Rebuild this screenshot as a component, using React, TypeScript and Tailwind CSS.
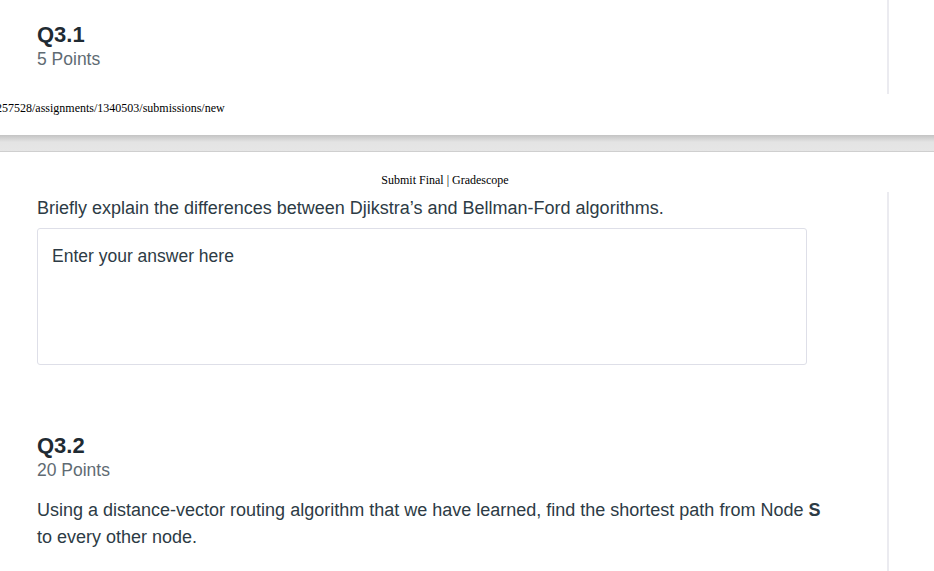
import React from "react";

export default function App() {
  const sans = { fontFamily: '"Liberation Sans", Arial, sans-serif' };
  return (
    <div className="w-[934px] h-[571px] overflow-hidden bg-white relative" style={sans}>
      {/* Page 1 tail */}
      <div className="h-[135px] flex flex-col">
        <div className="w-[889px] h-[94px] border-r-2 border-[#ebebf0] pl-[37px] pt-[22px]">
          <div className="text-[22px] leading-[26px] font-bold text-[#1f2b33]">Q3.1</div>
          <div className="text-[17.5px] leading-[22px] text-[#5f6b73]">5 Points</div>
        </div>
        <div
          className="ml-[-4px] mt-[7px] text-[12px] leading-[15px] text-black whitespace-nowrap"
          style={{ fontFamily: '"Liberation Serif", "Times New Roman", serif' }}
        >
          257528/assignments/1340503/submissions/new
        </div>
      </div>
      {/* page break band */}
      <div className="h-[17px] bg-gradient-to-b from-[#c4c4c4] via-[#e4e4e4] via-[45%] to-[#e6e6e6] border-b border-[#cfcfcf]" />
      {/* Page 2 */}
      <div className="relative">
        <div
          className="absolute left-0 top-[21px] w-[890px] text-center text-[12px] leading-[15px] text-black"
          style={{ fontFamily: '"Liberation Serif", "Times New Roman", serif' }}
        >
          Submit Final | Gradescope
        </div>
        <div className="flex">
          <div className="w-[887px] pl-[37px] pt-[44px]">
            <div className="text-[18px] leading-[24px] text-[#2d3b45]">
              Briefly explain the differences between Djikstra’s and Bellman-Ford algorithms.
            </div>
            <div className="mt-[8px] w-[770px] h-[137px] border border-[#dedfe8] rounded-[3px] px-[14px] pt-[16px] text-[17.5px] leading-[22px] text-[#2d3b45]">
              Enter your answer here
            </div>
            <div className="mt-[68px] text-[22px] leading-[26px] font-bold text-[#1f2b33]">Q3.2</div>
            <div className="text-[17.5px] leading-[22px] text-[#5f6b73]">20 Points</div>
            <div className="mt-[16px] w-[795px] text-[18px] leading-[27px] text-[#2d3b45]">
              Using a distance-vector routing algorithm that we have learned, find the shortest path from Node <b>S</b> to every other node.
            </div>
          </div>
          <div className="mt-[40px] w-[2px] h-[400px] bg-[#ebebf0]" />
        </div>
      </div>
    </div>
  );
}
